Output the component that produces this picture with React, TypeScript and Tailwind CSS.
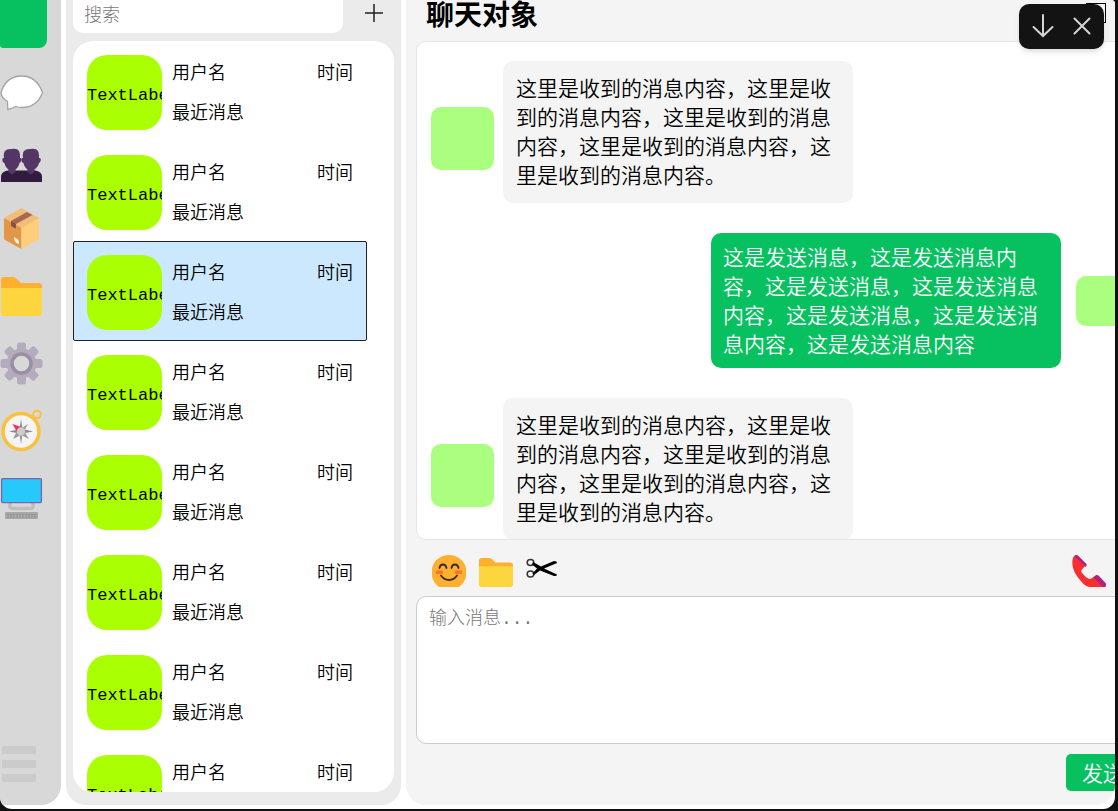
import React, { useState } from 'react';
import clsx from 'clsx';

const RECEIVED =
  '这里是收到的消息内容，这里是收到的消息内容，这里是收到的消息内容，这里是收到的消息内容，这里是收到的消息内容。';
const SENT =
  '这是发送消息，这是发送消息内容，这是发送消息，这是发送消息内容，这是发送消息，这是发送消息内容，这是发送消息内容';

interface Contact {
  id: number;
  name: string;
  time: string;
  lastMessage: string;
}

interface Message {
  id: number;
  type: 'received' | 'sent';
  content: string;
}

const contacts: Contact[] = Array.from({ length: 8 }, (_, i) => ({
  id: i,
  name: '用户名',
  time: '时间',
  lastMessage: '最近消息',
}));

const messages: Message[] = [
  { id: 1, type: 'received', content: RECEIVED },
  { id: 2, type: 'sent', content: SENT },
  { id: 3, type: 'received', content: RECEIVED },
];

const SpeechIcon = () => (
  <svg viewBox="0 0 43 43" className="h-[43px] w-[43px]">
    <path
      d="M7.5 27.5C3.5 25 1 22 1 18.500C4 9 10 2 21.500 2S39 9 42.500 18.500C39 28 33 33.500 22 33.500C19 33.500 17 33 15.500 32.500C13 34 11 35 7.800 35.500Z"
      fill="#fff"
      stroke="#a3a3a3"
      strokeWidth="1.3"
      strokeLinejoin="round"
    />
  </svg>
);

const PeopleIcon = () => (
  <svg viewBox="0 0 43 43" className="h-[43px] w-[43px]">
    <path d="M1 41V36C1 32 4 30 8 29.500H35C39 30 42 32 42 36V41Z" fill="#321b41" />
    <g fill="#533566">
      <path d="M12 8C18 7 20.500 10 20 17C20.500 17 21.500 17 21.300 19C21 21 20 22 19.500 22C19 25 17.500 27 15.500 28.500V31L12 33.500L8.500 31V28.500C6.500 27 5 25 4.500 22C3.500 22 2.500 21 2.300 19C2.200 17 3.500 17 4 17C3 10 6 7.500 12 8Z" />
      <path d="M31 8C37 7 39.500 10 39 17C39.500 17 41 17 40.800 19C40.500 21 39.500 22 39 22C38.500 25 36.500 27 34.500 28.500V31L31 33.500L27.500 31V28.500C25.500 27 24 25 23.500 22C22.500 22 21.500 21 21.300 19C21.200 17 22.500 17 23 17C22 10 25 7.500 31 8Z" />
    </g>
  </svg>
);

const BoxIcon = () => (
  <svg viewBox="0 0 43 43" className="h-[43px] w-[43px]">
    <path d="M4 10L21.500 18V41L5 32Q4 31.500 4 30Z" fill="#e19747" />
    <path d="M39 10L21.500 18V41L38 32Q39 31.500 39 30Z" fill="#ffce7c" />
    <path d="M21.500 0L39 10L21.500 20L4 10Z" fill="#f2bd76" />
    <path d="M27 4L32.500 7L16 16V20.500L11 18V13Z" fill="#a56953" />
    <path d="M11 13L16 16V20.500L11 18Z" fill="#8b5144" />
    <path d="M14 29L18 31.500Q19.500 34 19 36Q14 35 14 29Z" fill="#fff3e0" />
  </svg>
);

const FolderIcon = ({ className }: { className: string }) => (
  <svg viewBox="0 0 41 39" preserveAspectRatio="none" className={className}>
    <path d="M0 3Q0 0 3 0H12Q14 0 15.500 1.500L20 6H38Q41 6.500 41 9V20H0Z" fill="#ffb02e" />
    <path d="M0 11H41V36Q41 39 38 39H3Q0 39 0 36Z" fill="#fcd53f" />
  </svg>
);

const GearIcon = () => (
  <svg viewBox="0 0 43 43" className="h-[43px] w-[43px]">
    <g fill="#b4acbc">
      {[0, 45, 90, 135].map((angle) => (
        <rect key={angle} x="17" y="0.5" width="9" height="42" rx="2.500" transform={`rotate(${angle} 21.500 21.500)`} />
      ))}
      <circle cx="21.500" cy="21.500" r="15" />
    </g>
    <circle cx="21.500" cy="21.500" r="9.500" fill="#d8d8d8" stroke="#998ea4" strokeWidth="3.500" />
  </svg>
);

const CompassIcon = () => (
  <svg viewBox="0 0 43 43" className="h-[43px] w-[43px]">
    <circle cx="37" cy="5.500" r="3.800" fill="none" stroke="#f9c23c" strokeWidth="2" />
    <circle cx="21" cy="22.500" r="18" fill="#f4f4f4" stroke="#f9c23c" strokeWidth="3.500" />
    <path d="M21 10L22.500 20L33 22.500L22.500 24.500L21 35L19.500 24.500L9 22.500L19.500 20Z" fill="#8c8c8c" />
    <path d="M28 15L24 22L29 30L21 26L13 30L17 22Z" fill="#9b9b9b" />
    <path d="M12.500 15L21 18L17 23Z" fill="#f8305f" />
    <circle cx="21" cy="22.500" r="4.200" fill="#ccc" />
  </svg>
);

const MonitorIcon = () => (
  <svg viewBox="0 0 43 43" className="h-[43px] w-[43px]">
    <path d="M10 27V30Q10 32.500 13 32.500H30Q33 32.500 33 30V27" fill="none" stroke="#bebebe" strokeWidth="3.500" />
    <rect x="1.600" y="2.600" width="39.800" height="24" rx="1" fill="#26c9fc" stroke="#7b63ad" strokeWidth="1.300" />
    <rect x="5" y="36" width="33" height="7" rx="1" fill="#a8a8a8" />
    <path d="M7 38.500H36M7 41H36" stroke="#8d8d8d" strokeDasharray="2 1" />
  </svg>
);

const SmileIcon = () => (
  <svg viewBox="0 0 34 32" className="h-8 w-[34px]">
    <path d="M7 32C-3 25 -2 11 4.500 5Q10 0 17 0T29.500 5C36 11 37 25 27 32Z" fill="#ffb02e" />
    <path d="M4 15.500H11V19H4ZM23 15.500H30V19H23Z" fill="#ff6723" opacity="0.8" />
    <g fill="none" stroke="#402a32" strokeWidth="1.800" strokeLinecap="round">
      <path d="M7.500 13Q8 9.500 11 9.500T14.500 13M19.500 13Q20 9.500 23 9.500T26.500 13" />
      <path d="M9 20.500Q12 25 17 25T25 20.500" />
    </g>
  </svg>
);

const ScissorsIcon = () => (
  <svg viewBox="0 0 31 22" className="h-[22px] w-[31px]">
    <g fill="none" stroke="#333" strokeWidth="1.500">
      <ellipse cx="4.500" cy="4.500" rx="3.300" ry="3" />
      <ellipse cx="4.500" cy="16" rx="3.300" ry="3" />
    </g>
    <path d="M7 4L15 8.500L28 3Q31 3 31 5L18 10.500L31 16.500Q31 18.500 28 18L14 12.500L8 17L6.500 15.500L11 10.500L6 6.500Z" fill="#000" />
  </svg>
);

const PhoneIcon = () => (
  <svg viewBox="0 0 34 32" className="h-8 w-[34px]">
    <path d="M2 1C-1 6 0 14 5 21C9 27 13 31 17 32H33L23 21L18.500 24Q15 24 11 19Q8 16 10 14.500L13 11L4 0Z" fill="#f92f2f" />
    <path d="M2.500 1Q4.500 -1 6.500 1L14 8.500Q15.500 10 13.500 12Z" fill="#b4207d" />
    <path d="M21.500 22.500L24 20Q25.500 19.500 27 21L34 28.500Q34.500 31 33 32H31Z" fill="#b4207d" />
  </svg>
);

const navItems = [
  { label: '聊天', icon: <SpeechIcon /> },
  { label: '联系人', icon: <PeopleIcon /> },
  { label: '收藏', icon: <BoxIcon /> },
  { label: '文件', icon: <FolderIcon className="ml-px h-[39px] w-[41px]" /> },
  { label: '设置', icon: <GearIcon /> },
  { label: '发现', icon: <CompassIcon /> },
  { label: '设备', icon: <MonitorIcon /> },
];

const Sidebar = () => (
  <nav className="flex w-[61px] shrink-0 flex-col items-start rounded-br-[20px] bg-[#d8d8d8]">
    <div className="mb-[14px] h-12 w-[47px] rounded-br-lg rounded-bl-[3px] bg-[#07c160]" />
    {navItems.map((item) => (
      <button key={item.label} aria-label={item.label} className="flex h-[67px] items-center">
        {item.icon}
      </button>
    ))}
    <button aria-label="菜单" className="mt-auto mb-[23px] ml-0.5 flex flex-col gap-1.5">
      <span className="h-2 w-[34px] bg-[#cbcbcb]" />
      <span className="h-2 w-[34px] bg-[#cbcbcb]" />
      <span className="h-2 w-[34px] bg-[#cbcbcb]" />
    </button>
  </nav>
);

interface ContactRowProps {
  contact: Contact;
  selected: boolean;
  onSelect: () => void;
}

const ContactRow = ({ contact, selected, onSelect }: ContactRowProps) => (
  <button
    onClick={onSelect}
    className={clsx(
      'flex h-[100px] w-[294px] items-center gap-[10px] rounded-xs border px-[13px] text-left text-[18px] leading-10 font-[350]',
      selected ? 'border-[#222] bg-[#cce8ff]' : 'border-transparent'
    )}
  >
    <span className="mt-0.5 flex h-[75px] w-[75px] shrink-0 items-center overflow-hidden rounded-[20px] bg-[#aaff00] pt-2 font-['Liberation_Mono',monospace] text-[17px] leading-6 font-normal">
      TextLabel
    </span>
    <span className="flex flex-1 flex-col">
      <span className="flex justify-between">
        <span>{contact.name}</span>
        <span>{contact.time}</span>
      </span>
      <span>{contact.lastMessage}</span>
    </span>
  </button>
);

const ContactPanel = () => {
  const [selectedId, setSelectedId] = useState(2);

  return (
    <section className="flex w-[335px] shrink-0 flex-col rounded-b-[20px] bg-[#ebebeb] px-[7px] pb-[13px]">
      <div className="mb-2 flex h-[33px] shrink-0 items-start">
        <input
          type="text"
          aria-label="搜索"
          placeholder="搜索"
          className="h-[33px] w-[270px] rounded-b-[10px] bg-white px-[11px] pb-2 text-[18px] font-light placeholder:text-[#777]"
        />
        <button aria-label="添加" className="ml-[22px] flex h-[26px] w-[18px] items-center justify-center">
          <svg viewBox="0 0 18 18" className="h-[18px] w-[18px]">
            <path d="M9 0V18M0 9H18" stroke="#222" strokeWidth="1.500" />
          </svg>
        </button>
      </div>
      <ul className="min-h-0 flex-1 overflow-hidden rounded-[20px] bg-white">
        {contacts.map((contact) => (
          <li key={contact.id}>
            <ContactRow
              contact={contact}
              selected={contact.id === selectedId}
              onSelect={() => setSelectedId(contact.id)}
            />
          </li>
        ))}
      </ul>
    </section>
  );
};

const MessageRow = ({ message }: { message: Message }) => {
  if (message.type === 'sent') {
    return (
      <div className="flex items-center justify-end gap-[15px]">
        <p className="w-[350px] rounded-[10px] bg-[#07c160] px-3 pt-[9px] pb-[10px] text-white">
          {message.content}
        </p>
        <div className="h-[50px] w-[63px] rounded-[10px] bg-[#aaff7f]" />
      </div>
    );
  }

  return (
    <div className="flex items-center gap-[9px]">
      <div className="mt-3 h-[63px] w-[63px] rounded-[10px] bg-[#aaff7f]" />
      <p className="w-[350px] rounded-[10px] bg-[#f4f4f4] px-[13px] pt-3 pb-[14px] text-black">{message.content}</p>
    </div>
  );
};

const ChatPanel = () => (
  <main className="min-w-0 flex-1 overflow-hidden rounded-b-[20px] bg-[#f4f4f4]">
    {/* The conversation runs past the right edge of the window */}
    <div className="-mr-[39px] flex h-full flex-col pb-[14px] pl-[10px]">
      <header className="flex h-[41px] shrink-0 items-start justify-between pr-12 pl-[10px]">
        <h1 className="text-[28px] leading-[26px] font-bold">聊天对象</h1>
        <button aria-label="最大化" className="mt-[3px] h-5 w-5 border border-black" />
      </header>

      <div className="min-h-0 flex-1 overflow-hidden rounded-[10px] border border-[#e6e6e6] bg-white px-[14px] pt-[19px]">
        <div className="flex flex-col gap-[30px] text-[21px] leading-[29px] font-[350]">
          {messages.map((message) => (
            <MessageRow key={message.id} message={message} />
          ))}
        </div>
      </div>

      {/* Toolbar */}
      <div className="flex h-14 shrink-0 items-start gap-[13px] pt-[15px] pr-12 pl-4">
        <button aria-label="表情">
          <SmileIcon />
        </button>
        <button aria-label="发送文件" className="mt-[3px]">
          <FolderIcon className="h-[29px] w-[34px]" />
        </button>
        <button aria-label="截图" className="mt-[3px]">
          <ScissorsIcon />
        </button>
        <button aria-label="语音通话" className="ml-auto">
          <PhoneIcon />
        </button>
      </div>

      <textarea
        aria-label="输入消息"
        placeholder="输入消息..."
        className="h-[148px] shrink-0 resize-none rounded-[10px] border border-[#ccc] bg-white px-3 py-2 font-['Liberation_Mono','Noto_Sans_CJK_SC',monospace] text-[18px] leading-7 font-light placeholder:text-[#777]"
      />
      <button className="mt-[10px] mr-[14px] h-[37px] w-[74px] shrink-0 self-end rounded-[5px] bg-[#07c160] text-[21px] font-[350] text-white">
        发送
      </button>
    </div>
  </main>
);

const App = () => {
  return (
    <div className="relative h-screen overflow-hidden bg-[#111] pr-[3px] pb-0.5 font-['Noto_Sans_CJK_SC',sans-serif] text-black">
      <div className="flex h-full gap-[5px] overflow-hidden rounded-tr-[4px] rounded-b-xl bg-white pb-1">
        <Sidebar />
        <ContactPanel />
        <ChatPanel />
      </div>

      {/* Floating controls */}
      <div className="absolute top-1 right-[14px] flex h-[45px] w-[85px] items-center justify-between rounded-[10px] bg-[#131313] px-[13px] pb-0.5 shadow-md">
        <button aria-label="向下">
          <svg viewBox="0 0 22 24" className="h-6 w-[22px]" fill="none" stroke="#d4d4d4" strokeWidth="2">
            <path d="M11 1V22M1.500 13L11 22L20.500 13" strokeLinecap="round" />
          </svg>
        </button>
        <button aria-label="关闭">
          <svg viewBox="0 0 18 18" className="h-[18px] w-[18px]" fill="none" stroke="#d4d4d4" strokeWidth="2">
            <path d="M1.500 1.500L16.500 16.500M16.500 1.500L1.500 16.500" strokeLinecap="round" />
          </svg>
        </button>
      </div>
    </div>
  );
};

export default App;
